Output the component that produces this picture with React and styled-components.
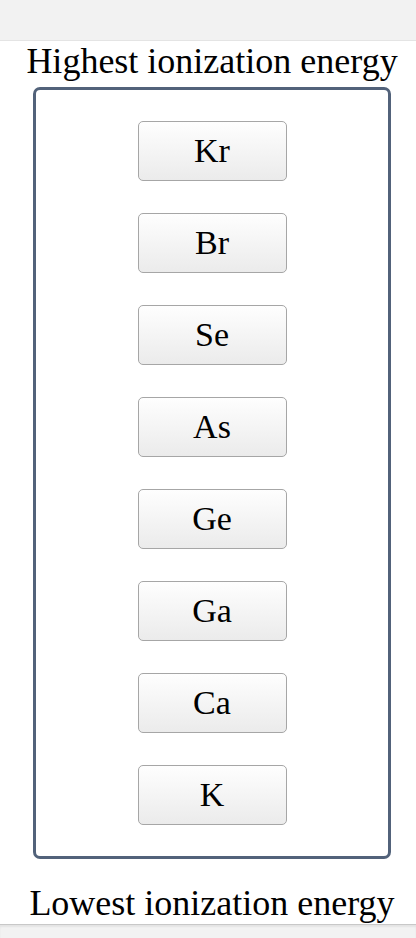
import React from "react";
import styled, { createGlobalStyle } from "styled-components";

const GlobalStyle = createGlobalStyle`
  html, body {
    margin: 0;
    padding: 0;
    background: #ffffff;
    font-family: "Liberation Serif", "Times New Roman", serif;
  }
`;

const elements = ["Kr", "Br", "Se", "As", "Ge", "Ga", "Ca", "K"];

const App = () => {
  return (
    <>
      <GlobalStyle />
      <Page>
        <TopBar />
        <Main>
          <Label>Highest ionization energy</Label>
          <RankBox>
            {elements.map((el) => (
              <Chip key={el} type="button">
                {el}
              </Chip>
            ))}
          </RankBox>
          <Label $bottom>Lowest ionization energy</Label>
        </Main>
        <BottomBar />
      </Page>
    </>
  );
};

export default App;

const Page = styled.div`
  display: flex;
  flex-direction: column;
  min-height: 938px;
`;

const TopBar = styled.div`
  height: 40px;
  background: #f2f2f2;
  border-bottom: 1px solid #e4e4e4;
`;

const Main = styled.div`
  display: flex;
  flex-direction: column;
  align-items: center;
  padding-left: 8px;
`;

const Label = styled.div`
  font-size: 36px;
  line-height: 40px;
  color: #000;
  white-space: nowrap;
  margin-top: ${(p) => (p.$bottom ? "24px" : "0")};
  margin-bottom: ${(p) => (p.$bottom ? "1px" : "6px")};
`;

const RankBox = styled.div`
  box-sizing: border-box;
  width: 358px;
  border: 3px solid #52627a;
  border-radius: 7px;
  padding: 31px 0;
  display: flex;
  flex-direction: column;
  align-items: center;
  gap: 32px;
`;

const Chip = styled.button`
  box-sizing: border-box;
  width: 149px;
  height: 60px;
  border: 1px solid #a6a6a6;
  border-radius: 5px;
  background: linear-gradient(#fefefe, #ebebeb);
  font-family: "Liberation Serif", "Times New Roman", serif;
  font-size: 34px;
  color: #000;
  padding: 0;
  cursor: pointer;
`;

const BottomBar = styled.div`
  flex: 1;
  background: #f2f2f2;
  border-top: 1px solid #c8c8c8;
  box-shadow: inset 0 2px 2px rgba(0, 0, 0, 0.06);
`;
